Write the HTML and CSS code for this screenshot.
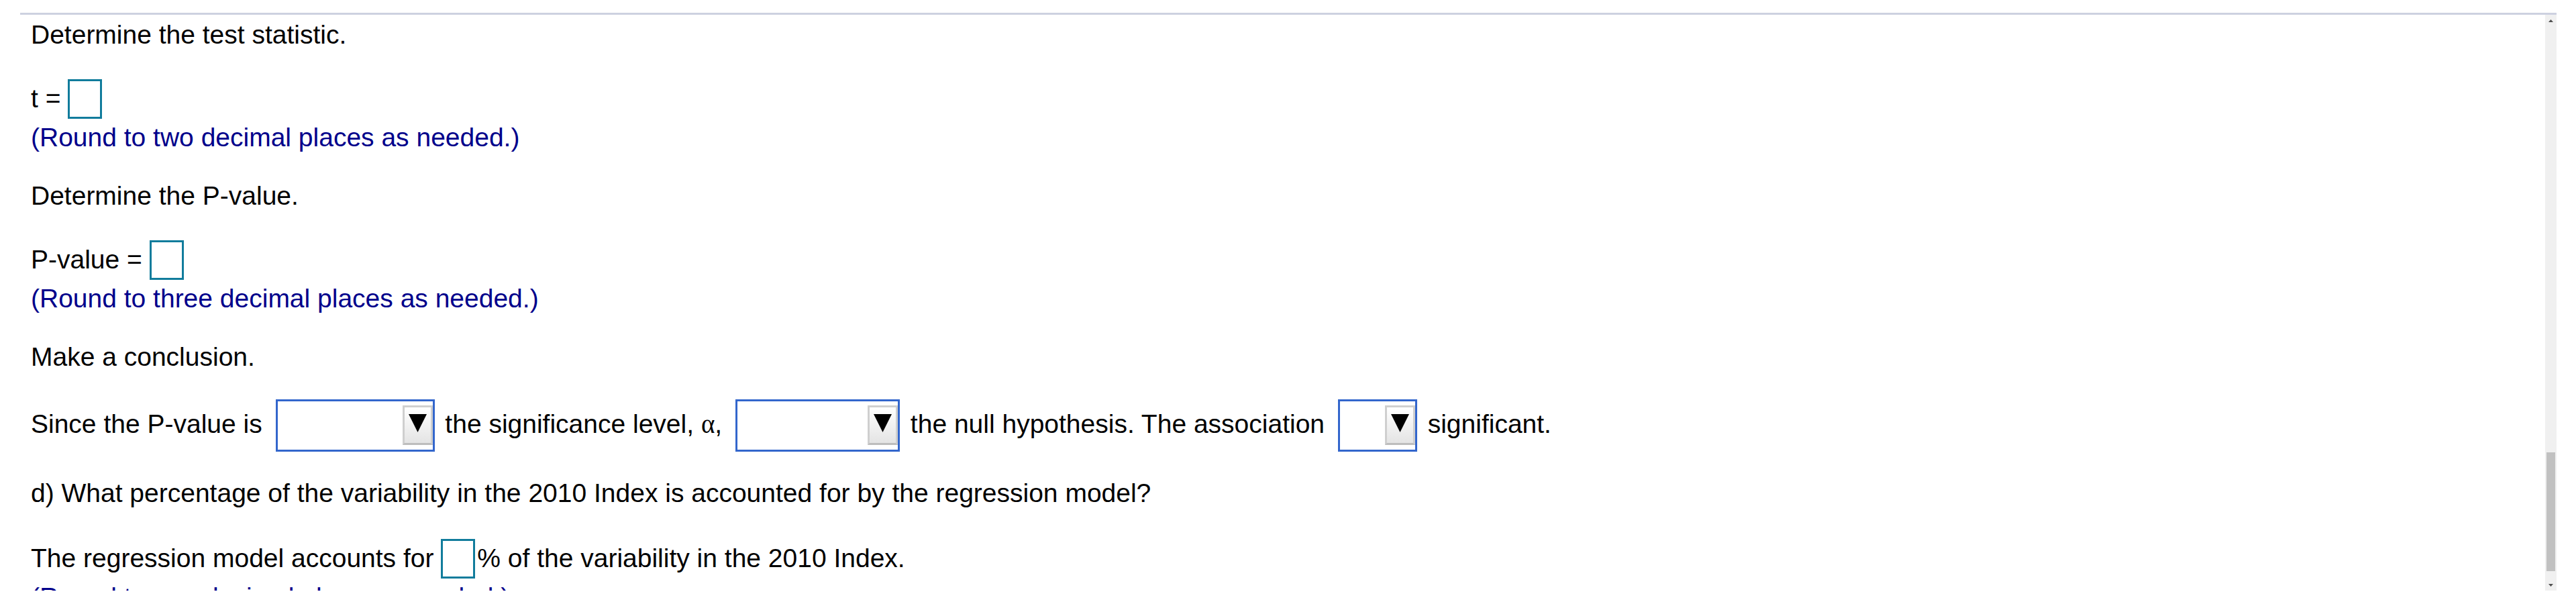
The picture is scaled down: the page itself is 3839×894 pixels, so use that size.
FILE: index.html
```html
<!DOCTYPE html>
<html lang="en">
<head>
<meta charset="utf-8">
<title>Regression question</title>
<link rel="stylesheet" href="styles.css">
</head>
<body>
<div class="frame">
  <div class="content">
    <p class="line first">Determine the test statistic.</p>
    <div class="group gap-box">
      <p class="line">t = <span class="answer"></span></p>
      <p class="line hint">(Round to two decimal places as needed.)</p>
    </div>
    <p class="line gap-text">Determine the P-value.</p>
    <div class="group gap-box">
      <p class="line">P-value = <span class="answer"></span></p>
      <p class="line hint">(Round to three decimal places as needed.)</p>
    </div>
    <p class="line gap-text">Make a conclusion.</p>
    <p class="line gap-row">Since the P-value is <span class="dd dd-a"><span class="dd-inner"><span class="dd-btn"><svg class="tri" viewBox="0 0 27 27" width="27" height="27"><polygon points="0,0 27,0 13.5,27" fill="#000"/></svg></span></span></span> the significance level, <span class="alpha">α</span>, <span class="dd dd-b"><span class="dd-inner"><span class="dd-btn"><svg class="tri" viewBox="0 0 27 27" width="27" height="27"><polygon points="0,0 27,0 13.5,27" fill="#000"/></svg></span></span></span> the null hypothesis. The association <span class="dd dd-c"><span class="dd-inner"><span class="dd-btn"><svg class="tri" viewBox="0 0 27 27" width="27" height="27"><polygon points="0,0 27,0 13.5,27" fill="#000"/></svg></span></span></span> significant.</p>
    <p class="line gap-q">d) What percentage of the variability in the 2010 Index is accounted for by the regression model?</p>
    <div class="group gap-last">
      <p class="line">The regression model accounts for <span class="answer tight"></span>% of the variability in the 2010 Index.</p>
      <p class="line hint">(Round to one decimal place as needed.)</p>
    </div>
  </div>
  <div class="scrollbar">
    <div class="sb-btn"><svg viewBox="0 0 7 4" width="7" height="4"><polygon points="3.5,0 7,4 0,4" fill="#505050"/></svg></div>
    <div class="sb-track"><div class="sb-thumb"></div></div>
    <div class="sb-btn"><svg viewBox="0 0 7 4" width="7" height="4"><polygon points="0,0 7,0 3.5,4" fill="#505050"/></svg></div>
  </div>
</div>
</body>
</html>
```

FILE: styles.css
```css
html, body {
  margin: 0;
  padding: 0;
  background: #ffffff;
}

body {
  font-family: "Liberation Sans", Arial, sans-serif;
  font-size: 39px;
  line-height: 55px;
  color: #000000;
}

.frame {
  margin: 19px 0 0 30px;
  width: 3780px;
  height: 858px;
  border-top: 3px solid #cdd1e0;
  display: flex;
}

.content {
  flex: 1;
  overflow: hidden;
  padding: 2px 0 0 16px;
}

.line {
  margin: 0;
  white-space: nowrap;
}

.group {
  margin: 0;
}

.gap-box { margin-top: 39px; }
.gap-text { margin-top: 32px; }
.gap-row { margin-top: 36px; }
.gap-q { margin-top: 34px; }
.gap-last { margin-top: 41px; }

.hint {
  color: #00008b;
}

.answer {
  display: inline-block;
  box-sizing: border-box;
  width: 51px;
  height: 59px;
  border: 3px solid #117c9c;
  vertical-align: -17px;
}

.answer.tight {
  margin-right: 3px;
}

.alpha {
  font-family: "Liberation Serif", "Times New Roman", serif;
}

.dd {
  display: inline-block;
  box-sizing: border-box;
  height: 78px;
  border: 3px solid #3366cc;
  overflow: hidden;
  vertical-align: -28px;
  margin: 0 5px 0 9px;
  background: #ffffff;
}

.dd-a { width: 237px; }
.dd-b { width: 245px; }
.dd-c { width: 118px; }

.dd-inner {
  display: flex;
  justify-content: flex-end;
  padding-top: 6px;
}

.dd-btn {
  box-sizing: border-box;
  width: 45px;
  height: 59px;
  border: 3px solid #cfcfcf;
  border-bottom-color: #bdbdbd;
  background: linear-gradient(#ffffff, #e4e4e4);
  display: flex;
  justify-content: center;
  align-items: flex-start;
  padding-top: 10px;
}

.tri {
  display: block;
}

.scrollbar {
  width: 17px;
  background: #f0f0f0;
  display: flex;
  flex-direction: column;
}

.sb-btn {
  height: 17px;
  display: flex;
  align-items: center;
  justify-content: center;
}

.sb-track {
  flex: 1;
  display: flex;
  flex-direction: column;
  align-items: center;
}

.sb-thumb {
  width: 13px;
  height: 177px;
  margin-top: 635px;
  background: #c1c1c1;
}
```
